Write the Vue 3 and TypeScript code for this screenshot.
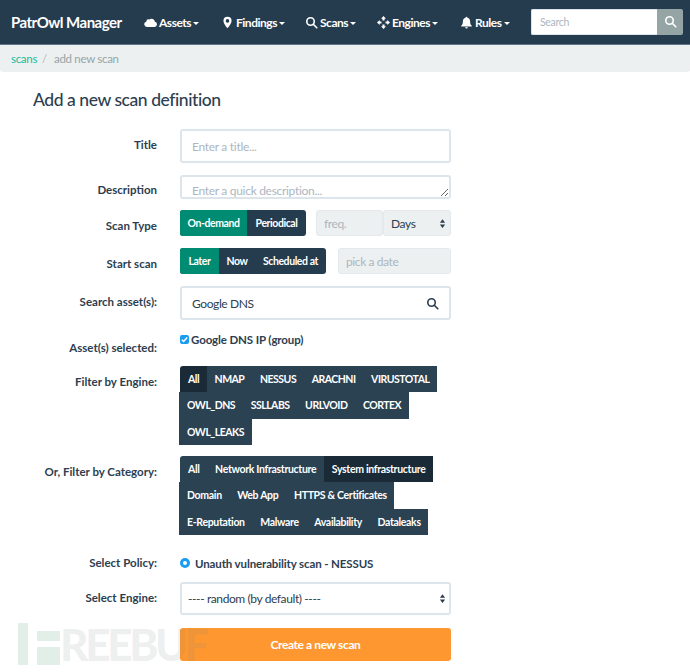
<script setup lang="ts">
const navItems = [
  { label: 'Assets', icon: 'cloud' },
  { label: 'Findings', icon: 'pin' },
  { label: 'Scans', icon: 'search' },
  { label: 'Engines', icon: 'move' },
  { label: 'Rules', icon: 'bell' },
]
const engines = ['All', 'NMAP', 'NESSUS', 'ARACHNI', 'VIRUSTOTAL', 'OWL_DNS', 'SSLLABS', 'URLVOID', 'CORTEX', 'OWL_LEAKS']
const categories = ['All', 'Network Infrastructure', 'System infrastructure', 'Domain', 'Web App', 'HTTPS & Certificates', 'E-Reputation', 'Malware', 'Availability', 'Dataleaks']
</script>

<template>
  <div class="page">
    <nav class="navbar">
      <span class="brand">PatrOwl Manager</span>
      <ul class="menu">
        <li v-for="item in navItems" :key="item.label" class="menu-item">
          <svg class="nav-icon" viewBox="0 0 16 16" aria-hidden="true">
            <path v-if="item.icon === 'cloud'" fill="#fff" d="M3.600 13.500a3.300 3.300 0 0 1-.8-6.500 3 3 0 0 1 3.700-2.700A4.200 4.200 0 0 1 13.400 7a3.300 3.300 0 0 1-.4 6.500z" />
            <path v-else-if="item.icon === 'pin'" fill="#fff" fill-rule="evenodd" d="M8 1a5 5 0 0 0-5 5c0 3.200 5 9 5 9s5-5.800 5-9a5 5 0 0 0-5-5zm0 2.800a2.200 2.200 0 1 1 0 4.400 2.200 2.200 0 0 1 0-4.400z" />
            <g v-else-if="item.icon === 'search'" fill="none" stroke="#fff" stroke-width="2">
              <circle cx="6.800" cy="6.800" r="4.600" />
              <path d="M10.200 10.200l4.300 4.300" stroke-linecap="round" />
            </g>
            <g v-else-if="item.icon === 'move'" fill="#fff">
              <path d="M8 0l3 3.300H9.300v2.200H6.700V3.300H5z" />
              <path d="M8 16l-3-3.300h1.700v-2.200h2.600v2.200H11z" />
              <path d="M0 8l3.300-3v1.700h2.200v2.600H3.300V11z" />
              <path d="M16 8l-3.300 3V9.300h-2.200V6.700h2.200V5z" />
            </g>
            <path v-else fill="#fff" d="M8 1a1.200 1.200 0 0 1 1.200 1.200C11.300 2.800 12.500 4.500 12.500 7c0 2.500.6 3.700 2 5v.8h-13V12c1.400-1.300 2-2.500 2-5 0-2.500 1.200-4.200 3.300-4.800A1.200 1.200 0 0 1 8 1zM6.300 13.700h3.400a1.700 1.700 0 0 1-3.400 0z" />
          </svg>
          <span>{{ item.label }}</span>
          <i class="caret"></i>
        </li>
      </ul>
      <div class="nav-search">
        <input class="nav-input" type="text" placeholder="Search" />
        <span class="nav-search-btn">
          <svg viewBox="0 0 16 16" width="13" height="13" aria-hidden="true">
            <g fill="none" stroke="#fff" stroke-width="2">
              <circle cx="6.800" cy="6.800" r="4.600" />
              <path d="M10.200 10.200l4.300 4.300" stroke-linecap="round" />
            </g>
          </svg>
        </span>
      </div>
    </nav>

    <div class="breadcrumb">
      <span class="crumb-link">scans</span>
      <span class="crumb-sep">/</span>
      <span class="crumb-current">add new scan</span>
    </div>

    <main class="content">
      <h1 class="title">Add a new scan definition</h1>

      <div class="row row-title">
        <label class="label">Title</label>
        <div class="field"><input class="control tall" type="text" placeholder="Enter a title..." /></div>
      </div>

      <div class="row row-desc">
        <label class="label">Description</label>
        <div class="field"><textarea class="control textarea" placeholder="Enter a quick description..."></textarea></div>
      </div>

      <div class="row row-type">
        <label class="label">Scan Type</label>
        <div class="field inline">
          <div class="toggle">
            <span class="tg on tg-ondemand">On-demand</span>
            <span class="tg tg-periodical">Periodical</span>
          </div>
          <input class="disabled-input freq" type="text" placeholder="freq." disabled />
          <div class="disabled-select">
            <span>Days</span>
            <svg class="updown" viewBox="0 0 8 12" aria-hidden="true"><path fill="#2c3e50" d="M4 1l3 4H1zM4 11L1 7h6z" /></svg>
          </div>
        </div>
      </div>

      <div class="row row-start">
        <label class="label">Start scan</label>
        <div class="field inline">
          <div class="toggle">
            <span class="tg on tg-later">Later</span>
            <span class="tg tg-now">Now</span>
            <span class="tg tg-sched">Scheduled at</span>
          </div>
          <input class="disabled-input date" type="text" placeholder="pick a date" disabled />
        </div>
      </div>

      <div class="row row-search">
        <label class="label">Search asset(s):</label>
        <div class="field search-field">
          <span class="search-text">Google DNS</span>
          <svg viewBox="0 0 16 16" width="13" height="13" aria-hidden="true">
            <g fill="none" stroke="#2c3e50" stroke-width="2">
              <circle cx="6.800" cy="6.800" r="4.600" />
              <path d="M10.200 10.200l4.300 4.300" stroke-linecap="round" />
            </g>
          </svg>
        </div>
      </div>

      <div class="row row-selected">
        <label class="label">Asset(s) selected:</label>
        <div class="field check-line">
          <span class="checkbox">
            <svg viewBox="0 0 10 10" width="9" height="9" aria-hidden="true"><path d="M2 5.200l2 2 4-4.400" fill="none" stroke="#fff" stroke-width="1.600" /></svg>
          </span>
          <span class="bold-text">Google DNS IP (group)</span>
        </div>
      </div>

      <div class="row row-engine">
        <label class="label">Filter by Engine:</label>
        <div class="field filter-group engines">
          <span v-for="(e, i) in engines" :key="e" class="chip" :class="{ active: i === 0, first: i === 0 }">{{ e }}</span>
        </div>
      </div>

      <div class="row row-cat">
        <label class="label">Or, Filter by Category:</label>
        <div class="field filter-group categories">
          <span v-for="(c, i) in categories" :key="c" class="chip" :class="{ active: i === 2, first: i === 0 }">{{ c }}</span>
        </div>
      </div>

      <div class="row row-policy">
        <label class="label">Select Policy:</label>
        <div class="field check-line policy-line">
          <span class="radio"></span>
          <span class="bold-text">Unauth vulnerability scan - NESSUS</span>
        </div>
      </div>

      <div class="row row-engine-select">
        <label class="label">Select Engine:</label>
        <div class="field select-box">
          <span>---- random (by default) ----</span>
          <svg class="updown" viewBox="0 0 8 12" aria-hidden="true"><path fill="#2c3e50" d="M4 1l3 4H1zM4 11L1 7h6z" /></svg>
        </div>
      </div>

      <div class="row row-submit">
        <span class="label"></span>
        <button class="submit" type="button">Create a new scan</button>
      </div>
    </main>

    <div class="watermark" aria-hidden="true">
      <span class="wm-mark">
        <i class="wm-bar"></i>
        <i class="wm-top"></i>
        <i class="wm-low"></i>
      </span>
      <span class="wm-text">REEBUF</span>
    </div>
  </div>
</template>

<style>
html, body { margin: 0; background: #fff; }
</style>

<style scoped>
.page {
  position: relative;
  width: 690px;
  height: 672px;
  overflow: hidden;
  background: #fff;
  font-family: Lato, "Liberation Sans", sans-serif;
  color: #2c3e50;
  font-size: 12px;
}
.navbar {
  height: 44px;
  background: #253c4f;
  border-bottom: 1px solid #5f7484;
  display: flex;
  align-items: center;
  color: #fff;
  box-sizing: content-box;
}
.brand {
  margin-left: 11px;
  width: 133px;
  font-size: 15px;
  font-weight: 700;
  letter-spacing: -0.520px;
  white-space: nowrap;
}
.menu {
  list-style: none;
  margin: 0;
  padding: 0;
  display: flex;
  width: 387px;
}
.menu-item {
  display: flex;
  align-items: center;
  font-size: 12px;
  font-weight: 700;
  letter-spacing: -0.480px;
  margin-right: 24px;
  white-space: nowrap;
}
.menu-item:nth-child(1) { width: 53px; }
.menu-item:nth-child(2) { width: 60px; }
.menu-item:nth-child(3) { width: 48px; }
.menu-item:nth-child(4) { width: 59px; }
.nav-icon {
  width: 13px;
  height: 13px;
  margin-right: 2px;
  flex: none;
}
.caret {
  width: 0;
  height: 0;
  margin-left: 2px;
  margin-top: 2px;
  border-left: 3px solid transparent;
  border-right: 3px solid transparent;
  border-top: 3px solid #fff;
}
.nav-search {
  display: flex;
  height: 26px;
  margin-top: -1px;
}
.nav-input {
  box-sizing: border-box;
  width: 126px;
  height: 26px;
  border: 1px solid #dce4ec;
  border-right: none;
  border-radius: 2px 0 0 2px;
  padding: 0 8px;
  font: 10.500px Lato, sans-serif;
  letter-spacing: -0.300px;
  background: #fff;
  outline: none;
}
.nav-input::placeholder { color: #acb6c0; opacity: 1; }
.nav-search-btn {
  width: 26px;
  height: 26px;
  background: #95a5a6;
  border-radius: 0 2px 2px 0;
  display: flex;
  align-items: center;
  justify-content: center;
}
.breadcrumb {
  height: 27px;
  background: #ecf0f1;
  border-radius: 0 0 3px 3px;
  padding-left: 11px;
  display: flex;
  align-items: center;
  font-size: 11.500px;
  letter-spacing: -0.300px;
}
.crumb-link { color: #18bc9c; }
.crumb-sep { color: #b4bcc2; margin: 0 7px 0 5px; }
.crumb-current { color: #95a5a6; }
.content { padding: 0; }
.title {
  margin: 17px 0 0 33px;
  font-size: 17.500px;
  line-height: 22px;
  font-weight: 500;
  letter-spacing: -0.440px;
  color: #2c3e50;
}
.row {
  display: flex;
  align-items: flex-start;
}
.label {
  width: 157px;
  flex: none;
  margin-right: 23px;
  text-align: right;
  font-size: 11.500px;
  font-weight: 700;
  line-height: 16px;
  color: #2c3e50;
  white-space: nowrap;
}
.field {
  width: 271px;
  flex: none;
}
.inline { display: flex; align-items: flex-start; }
.row-title { margin-top: 18px; }
.row-title .label { padding-top: 8px; }
.row-desc { margin-top: 12px; }
.row-desc .label { padding-top: 7px; }
.row-type { margin-top: 11px; }
.row-type .label { padding-top: 8px; }
.row-start { margin-top: 12px; }
.row-start .label { padding-top: 8px; }
.row-search { margin-top: 12px; }
.row-search .label { padding-top: 8px; }
.row-selected { margin-top: 12px; height: 34px; }
.row-selected .label { padding-top: 8px; }
.row-selected .check-line { margin-top: -1px; }
.row-engine { margin-top: 0; height: 90px; }
.row-engine .label { padding-top: 8px; }
.row-cat { margin-top: 0; height: 99px; }
.row-cat .label { padding-top: 8px; }
.row-policy { height: 27px; }
.row-policy .label { padding-top: 0; }
.row-engine-select .label { padding-top: 8px; }
.row-submit { margin-top: 13px; }

.control {
  display: block;
  box-sizing: border-box;
  width: 271px;
  border: 2px solid #dce4ec;
  border-radius: 3px;
  background: #fff;
  padding: 0 10px;
  font: 12px Lato, sans-serif;
  letter-spacing: -0.300px;
  color: #2c3e50;
  outline: none;
}
.control::placeholder { color: #acb6c0; opacity: 1; }
.tall { height: 34px; }
.textarea {
  height: 24px;
  padding-top: 7px;
  line-height: 14px;
  resize: vertical;
  overflow: hidden;
}
.toggle {
  display: flex;
  height: 26px;
  border-radius: 3px;
  overflow: hidden;
  flex: none;
  background: #253c4f;
  color: #fff;
  font-size: 10.500px;
  font-weight: 700;
  letter-spacing: -0.420px;
}
.tg {
  display: flex;
  align-items: center;
  justify-content: center;
  box-sizing: border-box;
  white-space: nowrap;
}
.tg.on { background: #008c72; }
.tg-ondemand { width: 67px; }
.tg-periodical { width: 59px; }
.tg-later { width: 39px; }
.tg-now { width: 36px; }
.tg-sched { width: 71px; }
.disabled-input, .disabled-select {
  box-sizing: border-box;
  height: 26px;
  background: #ecf0f1;
  border: 1px solid #e3e9ec;
  border-radius: 3px;
  font: 12px Lato, sans-serif;
  letter-spacing: -0.400px;
  color: #2c3e50;
}
.disabled-input::placeholder { color: #acb6c0; opacity: 1; }
.disabled-input { padding: 0 7px; }
.freq { width: 67px; margin-left: 10px; }
.date { width: 113px; margin-left: 12px; }
.disabled-select {
  width: 68px;
  margin-left: 0;
  padding: 0 4px 0 7px;
  display: flex;
  align-items: center;
  justify-content: space-between;
}
.updown { width: 7px; height: 11px; flex: none; }
.search-field {
  box-sizing: border-box;
  height: 34px;
  border: 2px solid #dce4ec;
  border-radius: 3px;
  display: flex;
  align-items: center;
  justify-content: space-between;
  padding: 0 10px;
  font-size: 12px;
  letter-spacing: -0.400px;
}
.check-line {
  display: flex;
  align-items: center;
  height: 16px;
}
.checkbox {
  width: 9px;
  height: 9px;
  border-radius: 2px;
  background: #1a9cf0;
  display: flex;
  align-items: center;
  justify-content: center;
  margin-right: 2px;
  margin-top: 1px;
}
.bold-text {
  font-size: 11.500px;
  font-weight: 700;
  letter-spacing: -0.120px;
  color: #2c3e50;
  white-space: nowrap;
}
.policy-line { margin-left: 0; }
.radio {
  box-sizing: border-box;
  width: 10px;
  height: 10px;
  border-radius: 50%;
  background: #fff;
  border: 3.500px solid #1a9cf0;
  margin-right: 5px;
}
.filter-group {
  display: flex;
  flex-wrap: wrap;
  align-content: flex-start;
  margin-left: -1px;
  width: 272px;
}
.chip {
  box-sizing: border-box;
  height: 26.250px;
  display: flex;
  align-items: center;
  padding: 0 7.500px 0 8px;
  background: #2b4253;
  color: #fff;
  font-size: 10.500px;
  font-weight: 700;
  white-space: nowrap;
}
.engines .chip { letter-spacing: -0.490px; }
.categories .chip { letter-spacing: -0.320px; }
.chip.first {
  margin-left: 1px;
  border-radius: 3px 0 0 0;
}
.chip.active { background: #1a2a36; }
.select-box {
  box-sizing: border-box;
  height: 33px;
  border: 2px solid #dce4ec;
  border-radius: 3px;
  display: flex;
  align-items: center;
  justify-content: space-between;
  padding: 0 3px 0 6px;
  font-size: 12px;
  letter-spacing: -0.400px;
  color: #2c3e50;
}
.submit {
  width: 271px;
  height: 33px;
  border: none;
  border-radius: 3px;
  background: #ff9730;
  color: #fff;
  font: 700 12px Lato, sans-serif;
  letter-spacing: -0.400px;
  padding: 0;
}
.watermark {
  position: absolute;
  left: 18px;
  top: 623px;
  height: 42px;
  display: flex;
  align-items: flex-end;
  pointer-events: none;
}
.wm-mark {
  position: relative;
  width: 42px;
  height: 42px;
  display: block;
}
.wm-bar, .wm-top, .wm-low {
  position: absolute;
  background: rgba(190, 220, 205, 0.45);
}
.wm-bar { left: 0; top: 0; width: 10px; height: 42px; }
.wm-top { left: 19px; top: 8px; width: 23px; height: 10px; }
.wm-low { left: 19px; top: 24px; width: 23px; height: 18px; }
.wm-text {
  font: 900 44px/42px Lato, sans-serif;
  letter-spacing: -3.300px;
  color: rgba(120, 130, 130, 0.14);
  margin-left: 0;
  white-space: nowrap;
}
</style>
